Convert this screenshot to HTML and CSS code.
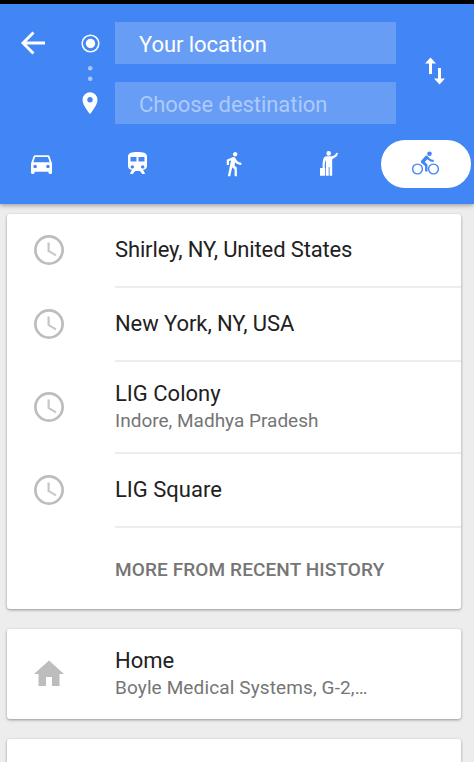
FILE: index.html
```html
<!DOCTYPE html>
<html lang="en">
<head>
<meta charset="utf-8">
<title>Directions</title>
<link rel="stylesheet" href="styles.css">
</head>
<body>
<svg width="0" height="0" class="defs">
  <symbol id="clock" viewBox="0 0 24 24">
    <circle cx="12" cy="12" r="9.100" fill="none" stroke="currentColor" stroke-width="1.800"/>
    <path opacity=".85" fill="currentColor" d="M12.500 7H11v6l5.250 3.150.75-1.230-4.500-2.670z"/>
  </symbol>
</svg>
<header class="header">
  <div class="route">
    <svg class="back" viewBox="0 0 24 24" width="24" height="24"><path d="M24 12H2M12.500 1.500 2 12l10.500 10.500" fill="none" stroke="#fff" stroke-width="2.900"/></svg>
    <svg class="markers" viewBox="0 0 20 102" width="20" height="102">
      <circle cx="10.500" cy="21.500" r="8.300" fill="none" stroke="#fff" stroke-width="1.500"/>
      <circle cx="10.500" cy="21.500" r="4.700" fill="#fff"/>
      <circle cx="10.200" cy="46.200" r="2.300" fill="#a9c7fa"/>
      <circle cx="10.200" cy="56.800" r="2.300" fill="#a9c7fa"/>
      <path fill="#fff" fill-rule="evenodd" d="M10 70.200a7.500 7.500 0 0 0-7.500 7.500C2.500 83.500 10 92 10 92s7.500-8.500 7.500-14.300A7.500 7.500 0 0 0 10 70.200zm0 4.800a2.700 2.700 0 1 1 0 5.400 2.700 2.700 0 0 1 0-5.400z"/>
    </svg>
    <div class="fields">
      <div class="field">Your location</div>
      <div class="field field-empty">Choose destination</div>
    </div>
    <svg class="swap" viewBox="0 0 22 28" width="22" height="28"><path fill="#fff" d="M6.500.500 12 6.500H8V17H5V6.500H1zM15.500 27.500 10 21.500h4V11h3v10.500h4z"/></svg>
  </div>
  <nav class="modes">
    <div class="mode"><svg viewBox="0.400 0.400 24 24" width="28" height="28"><path fill="currentColor" d="M18.920 6.010C18.720 5.420 18.160 5 17.500 5h-11c-.66 0-1.210.42-1.420 1.010L3 12v8c0 .55.45 1 1 1h1c.55 0 1-.45 1-1v-1h12v1c0 .55.45 1 1 1h1c.55 0 1-.45 1-1v-8l-2.080-5.990zM6.500 16c-.83 0-1.500-.67-1.500-1.500S5.670 13 6.500 13s1.500.67 1.500 1.500S7.330 16 6.500 16zm11 0c-.83 0-1.500-.67-1.500-1.500s.67-1.500 1.500-1.500 1.500.67 1.500 1.500-.67 1.500-1.500 1.500zM5 11l1.500-4.500h11L19 11H5z"/></svg></div>
    <div class="mode"><svg viewBox="0.500 0 28 28" width="28" height="28"><path fill="currentColor" fill-rule="evenodd" d="M14 2C8.500 2 4.500 2.700 4.500 6.500v9.200c0 2.400 1.700 4 4 4L6.700 23v1h2.500l2.500-3h4.600l2.500 3h2.500v-1l-1.800-3.300c2.300 0 4-1.600 4-4V6.500C23.500 2.700 19.500 2 14 2zM7 7h6v4.500H7zm8 0h6v4.500h-6zM8.800 15.200a1.700 1.700 0 1 1 0 3.400 1.700 1.700 0 0 1 0-3.400zm10.400 0a1.700 1.700 0 1 1 0 3.400 1.700 1.700 0 0 1 0-3.400z"/></svg></div>
    <div class="mode"><svg viewBox="0.900 0.600 24 24" width="27" height="27"><path fill="currentColor" d="M13.500 5.500c1.100 0 2-.9 2-2s-.9-2-2-2-2 .9-2 2 .9 2 2 2zM9.800 8.900 7 23h2.100l1.800-8 2.100 2v6h2v-7.500l-2.100-2 .6-3C14.800 12 16.800 13 19 13v-2c-1.900 0-3.500-1-4.300-2.400l-1-1.600c-.4-.6-1-1-1.700-1-.3 0-.5.100-.8.100L6 8.300V13h2V9.600l1.800-.7"/></svg></div>
    <div class="mode"><svg viewBox="0 0 28 28" width="28" height="28"><g fill="currentColor"><circle cx="12.700" cy="3.400" r="2.300"/><path d="M10 6.300h6l3-1.300 1.400-2.300 1.800.9-1.700 3-4.300 2.700v16.400h-2.600V17h-.9v8.700H10V10.200c-1 1-1.200 2.800-1.200 6.800V18h.4v7.700H4V18h2.600v-1c0-6.500.5-10 3.400-10.700z"/></g></svg></div>
    <div class="mode mode-active"><svg viewBox="0 0 28 28" width="28" height="28"><g fill="none" stroke="currentColor"><circle cx="5.500" cy="19" r="4.900" stroke-width="1.400"/><circle cx="21.500" cy="19" r="4.900" stroke-width="1.400"/></g><circle cx="17.500" cy="3.800" r="2.300" fill="currentColor"/><path fill="currentColor" d="M13.700 5.700c.6-.3 1.300-.2 1.800.3l2.300 2.400c1 .9 2.200 1.400 3.900 1.400v2.300c-2.200 0-4-.7-5.400-2l-.9-.9-2.600 2.700 2.700 2.700v7h-2.400v-5.500l-3.700-3.200c-.8-.7-.8-1.700 0-2.500z"/></svg></div>
  </nav>
</header>
<main class="results">
  <section class="card">
    <div class="row"><svg class="icon clock"><use href="#clock"/></svg><div class="text"><div class="title title-long">Shirley, NY, United States</div></div></div>
    <div class="row"><svg class="icon clock"><use href="#clock"/></svg><div class="text"><div class="title title-medium">New York, NY, USA</div></div></div>
    <div class="row row-tall"><svg class="icon clock"><use href="#clock"/></svg><div class="text"><div class="title">LIG Colony</div><div class="subtitle">Indore, Madhya Pradesh</div></div></div>
    <div class="row"><svg class="icon clock"><use href="#clock"/></svg><div class="text"><div class="title">LIG Square</div></div></div>
    <div class="more">MORE FROM RECENT HISTORY</div>
  </section>
  <section class="card">
    <div class="row row-home"><svg class="icon" viewBox="0 0 24 24"><path fill="currentColor" d="M10 20v-6h4v6h5v-8h3L12 3 2 12h3v8z"/></svg><div class="text"><div class="title">Home</div><div class="subtitle subtitle-address">Boyle Medical Systems, G-2,…</div></div></div>
  </section>
  <section class="card card-next"></section>
</main>
</body>
</html>
```
FILE: styles.css
```css
* { box-sizing: border-box; }
body {
  margin: 0;
  height: 762px;
  overflow: hidden;
  background: #ededed;
  font-family: Roboto, sans-serif;
  color: #212121;
}
svg { display: block; flex: none; }
.defs { height: 0; }
.header {
  height: 204px;
  border-top: 4px solid #000;
  background: #4285f4;
  box-shadow: 0 1px 5px rgba(0, 0, 0, .4);
}
.route {
  display: flex;
  align-items: flex-start;
  height: 136px;
  padding: 18px 0 0 21px;
}
.back { margin-top: 9px; }
.markers { margin-left: 35px; }
.fields {
  display: grid;
  gap: 18px;
  width: 281px;
  margin-left: 15px;
}
.field {
  height: 42px;
  padding-left: 24px;
  line-height: 46px;
  font-size: 22px;
  letter-spacing: -.06px;
  white-space: nowrap;
  color: #fff;
  background: #689df6;
}
.field-empty { color: #adcafa; }
.swap { margin: 35px 0 0 28px; }
.modes {
  display: grid;
  grid-template-columns: repeat(5, 90px);
  gap: 6px;
  margin-left: -3px;
}
.mode {
  display: flex;
  align-items: center;
  justify-content: center;
  height: 48px;
  border-radius: 24px;
  color: #fff;
}
.mode-active { background: #fff; color: #4285f4; }
.results {
  display: grid;
  gap: 20px;
  height: 558px;
  padding: 10px 13px 0 7px;
  grid-template-rows: 395px 90px 23px;
}
.card {
  background: #fff;
  border-radius: 3px;
  box-shadow: 0 1px 3px rgba(0, 0, 0, .38);
}
.row {
  display: flex;
  align-items: center;
  height: 74px;
  padding-left: 24px;
}
.row-tall { height: 92px; }
.row-home { height: 90px; }
.icon {
  width: 36px;
  height: 36px;
  margin-right: 48px;
  color: #bdbdbd;
}
.clock { margin-bottom: 2px; }
.text {
  flex: 1;
  height: 100%;
  display: flex;
  flex-direction: column;
  justify-content: center;
  border-bottom: 2px solid #ededed;
}
.row-home .text { border-bottom: 0; }
.title { font-size: 22px; line-height: 28px; }
.title-long { letter-spacing: -.14px; }
.title-medium { letter-spacing: -.08px; }
.subtitle { font-size: 19px; line-height: 26px; color: #757575; }
.subtitle-address { letter-spacing: .12px; }
.more {
  height: 81px;
  padding-left: 108px;
  line-height: 83px;
  font-size: 19px;
  font-weight: 500;
  letter-spacing: .11px;
  color: #757575;
}
.card-next { border-radius: 3px 3px 0 0; }
```
